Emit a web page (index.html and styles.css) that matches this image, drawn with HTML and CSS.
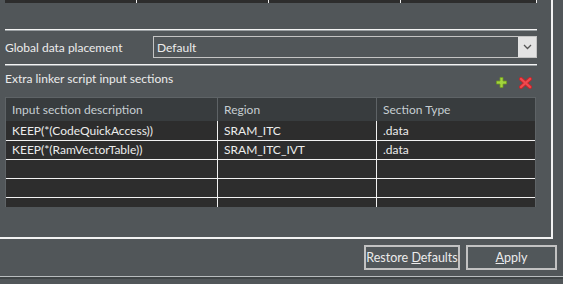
FILE: index.html
```html
<!DOCTYPE html>
<html lang="en">
<head>
    <meta charset="UTF-8">
    <title>Linker Settings</title>
    <link rel="stylesheet" href="styles.css">
</head>
<body>

    <div class="frame">
        <div class="old-table">
            <div></div><div></div><div></div><div></div>
        </div>

        <div class="sep"></div>

        <div class="field-row">
            <label class="field-label">Global data placement</label>
            <div class="combo">
                <span class="combo-text">Default</span>
                <span class="combo-btn">
                    <svg width="9" height="6" viewBox="0 0 9 6"><path d="M1 1 L4.5 4.5 L8 1" fill="none" stroke="#555" stroke-width="1.3"/></svg>
                </span>
            </div>
        </div>

        <div class="sep"></div>

        <div class="section-head">
            <span>Extra linker script input sections</span>
            <div class="tools">
                <svg class="tool" width="11" height="11" viewBox="0 0 11 11">
                    <path d="M4 0.5 H7 V4 H10.5 V7 H7 V10.5 H4 V7 H0.5 V4 H4 Z" fill="#a2d43c" stroke="#6f9a22" stroke-width="0.8"/>
                </svg>
                <svg class="tool" width="13" height="12" viewBox="0 0 13 12">
                    <path d="M2 2 L11 10 M11 2 L2 10" stroke="#c9252b" stroke-width="4" stroke-linecap="round"/>
                    <path d="M2 2 L11 10 M11 2 L2 10" stroke="#f04a4f" stroke-width="2.2" stroke-linecap="round"/>
                </svg>
            </div>
        </div>

        <div class="sections">
            <div class="grid-row head">
                <div>Input section description</div>
                <div>Region</div>
                <div>Section Type</div>
            </div>
            <div class="grid-row first">
                <div>KEEP(*(CodeQuickAccess))</div>
                <div>SRAM_ITC</div>
                <div>.data</div>
            </div>
            <div class="grid-row">
                <div>KEEP(*(RamVectorTable))</div>
                <div>SRAM_ITC_IVT</div>
                <div>.data</div>
            </div>
            <div class="grid-row">
                <div></div><div></div><div></div>
            </div>
            <div class="grid-row">
                <div></div><div></div><div></div>
            </div>
            <div class="grid-row">
                <div></div><div></div><div></div>
            </div>
        </div>
    </div>

    <div class="buttons">
        <button class="btn restore">Restore <u>D</u>efaults</button>
        <button class="btn apply"><u>A</u>pply</button>
    </div>
    <div class="bottom-line"></div>

</body>
</html>
```

FILE: styles.css
```css
body {
    margin: 0;
    width: 563px;
    height: 284px;
    overflow: hidden;
    background-color: #515659;
    color: #ececec;
    font-family: 'Lato', 'Noto Sans', sans-serif;
    font-size: 12px;
}

.frame {
    width: 553px;
    height: 239px;
    padding-left: 5px;
    box-sizing: border-box;
    border-right: 2px solid #f2f2f2;
    border-bottom: 2px solid #f2f2f2;
    display: flex;
    flex-direction: column;
}

.old-table {
    width: 531px;
    height: 3px;
    display: grid;
    grid-template-columns: 132px 132px 132px 134px;
    background-color: #2d2d2d;
    border-right: 1px solid #f0f0f0;
}

.old-table div {
    border-right: 1px solid #f0f0f0;
}

.old-table div:last-child {
    border-right: none;
}

.sep {
    width: 532px;
    height: 1px;
    border-top: 1px solid #f4f4f4;
    background-color: #9a9fa2;
    margin-top: 26px;
}

.field-row {
    display: flex;
    align-items: center;
    height: 22px;
    margin-top: 5px;
}

.field-label {
    width: 148px;
}

.combo {
    width: 384px;
    height: 22px;
    box-sizing: border-box;
    border: 1px solid #c4c4c4;
    display: flex;
    align-items: center;
}

.combo-text {
    flex: 1;
    padding-left: 3px;
}

.combo-btn {
    width: 18px;
    height: 20px;
    background-color: #e3e3e3;
    display: flex;
    align-items: center;
    justify-content: center;
}

.field-row + .sep {
    margin-top: 6px;
}

.section-head {
    height: 31px;
    width: 531px;
    display: flex;
    align-items: center;
    justify-content: space-between;
    padding: 0 4px 7px 0;
    box-sizing: border-box;
}

.tools {
    display: flex;
    align-items: center;
    gap: 12px;
    padding-top: 9px;
}

.sections {
    width: 531px;
    height: 110px;
    overflow: hidden;
    box-sizing: border-box;
    border: 1px solid #5e6366;
    border-bottom: none;
    background-color: #2d2d2d;
}

.grid-row {
    display: grid;
    grid-template-columns: 211px 159px 159px;
    height: 19px;
    box-sizing: border-box;
    border-top: 1px solid #f2f2f2;
}

.grid-row div {
    padding-left: 6px;
    line-height: 17px;
    border-left: 1px solid #f2f2f2;
    white-space: nowrap;
}

.grid-row div:first-child {
    border-left: none;
}

.grid-row.head {
    height: 23px;
    border-top: none;
    background-color: #383c3e;
    color: #c6ced2;
}

.grid-row.head div {
    line-height: 23px;
    border-left-color: #5e6366;
}

.grid-row.first {
    border-top: none;
    height: 19px;
}

.grid-row.first div {
    line-height: 19px;
}

.buttons {
    display: flex;
    justify-content: flex-end;
    gap: 6px;
    padding: 6px 6px 0 0;
    height: 37px;
    box-sizing: border-box;
}

.btn {
    height: 25px;
    box-sizing: border-box;
    border: 2px solid #c2c2c2;
    background-color: #51575a;
    color: #ececec;
    font-family: 'Lato', 'Noto Sans', sans-serif;
    font-size: 12.5px;
    padding: 0;
    white-space: nowrap;
}

.restore {
    width: 96px;
}

.apply {
    width: 91px;
}

.bottom-line {
    height: 2px;
    border-top: 1px solid #b8bcbe;
    background-color: #3f4446;
}
```
